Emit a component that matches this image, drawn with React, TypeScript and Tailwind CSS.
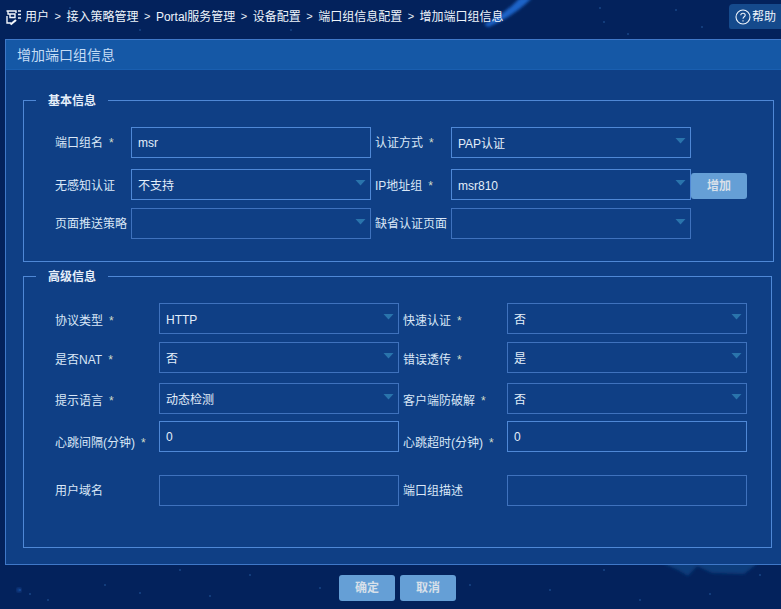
import type { ReactNode } from 'react'

const FONT = 'font-["Liberation_Sans","Noto_Sans_CJK_SC",sans-serif]'
const crumbs = ['用户', '接入策略管理', 'Portal服务管理', '设备配置', '端口组信息配置', '增加端口组信息']

const STARS = [
  [70, 8], [140, 30], [291, 30], [600, 8], [604, 22], [676, 10], [702, 27], [628, 34], [20, 590], [30, 594], [48, 600],
  [105, 585], [140, 593], [210, 596], [320, 588], [470, 585], [550, 590], [604, 570], [640, 600], [710, 594], [760, 575], [250, 575], [180, 570],
]

function Background() {
  return (
    <svg className="absolute inset-0" width="781" height="609">
      <defs>
        <filter id="glow"><feGaussianBlur stdDeviation="1.6" /></filter>
      </defs>
      <path d="M488 27 C505 20 520 10 532 -2 L520 -2 C510 8 498 18 484 24 Z" fill="#1c63c8" filter="url(#glow)" />
      {STARS.map(([x, y]) => (
        <circle key={`${x}-${y}`} cx={x} cy={y} r="0.7" fill="#2f6cb4" />
      ))}
      <circle cx="19" cy="590" r="2" fill="#1a50a4" filter="url(#glow)" />
      <path d="M660 562 L678 570 L688 576 L697 566 L712 573 L744 574 L758 563 Z" fill="#0f3c7c" filter="url(#glow)" />
    </svg>
  )
}

function Chevron() {
  return (
    <svg className="absolute right-[4px] top-[10px]" width="11" height="6" viewBox="0 0 11 6">
      <path d="M0.5 0 H10.5 L5.5 5.5 Z" fill="#2a74ac" />
    </svg>
  )
}

function Field({ value = '', select, dim, width, textTop }: { value?: string; select?: boolean; dim?: boolean; width: string; textTop?: boolean }) {
  return (
    <div className={`relative h-[31px] ${width} shrink-0 border ${dim ? 'border-[#3f72bd]' : 'border-[#4f88d6]'} flex ${textTop ? 'items-start pt-[6px]' : 'items-center'} ${select ? 'pt-[2px]' : ''} pl-[6px] text-[12px] text-[#e3eefa]`}>
      {value}
      {select && <Chevron />}
    </div>
  )
}

function Label({ text, star, width, className = '' }: { text: string; star?: boolean; width: string; className?: string }) {
  return (
    <div className={`${width} shrink-0 text-[12px] text-[#d9e7f7] whitespace-nowrap ${className}`}>
      {text}
      {star && <span className="ml-[6px] text-[#cfdcc8]">*</span>}
    </div>
  )
}

function Box({ title, className, children }: { title: string; className: string; children: ReactNode }) {
  return (
    <fieldset className={`border border-[#4f88d6] ${className}`}>
      <legend className="ml-[12px] px-[12px] h-[20px] leading-[22px] text-[12px] font-bold text-[#e6effa]">{title}</legend>
      {children}
    </fieldset>
  )
}

function Row({ className = '', children }: { className?: string; children: ReactNode }) {
  return <div className={`flex items-center ${className}`}>{children}</div>
}

export default function App() {
  return (
    <div className={`relative w-[781px] h-[609px] overflow-hidden bg-[#03225c] ${FONT}`}>
      <Background />
      <div className="relative flex flex-col h-full">
        {/* Breadcrumb */}
        <div className="h-[39px] flex items-start">
          <div className="flex items-center h-[33px] pl-[5px] text-[12px] text-[#eef4fb]">
            <svg width="17" height="17" viewBox="0 0 17 17" fill="none" stroke="#f2f6fb" strokeWidth="1.4" className="mr-[3px] mt-[2px]">
              <path d="M1.5 2 H11 V4 M3 2 V5 H10 V8.5 H5 V5 M2 7 V14 H6" />
              <path d="M13 2 H16 M13 5.5 H16 M13 9 H16" />
              <path d="M5.5 15.5 L11 11" strokeWidth="2.2" />
            </svg>
            {crumbs.map((c, i) => (
              <span key={c} className="flex items-center">
                {i > 0 && <span className="mx-[5.5px] text-[11px]">&gt;</span>}
                {c}
              </span>
            ))}
          </div>
          <div className="ml-auto mt-[4px] w-[52px] h-[25px] rounded-tl-[4px] rounded-bl-[2px] bg-[#154a8c] flex items-center pl-[6px] text-[12px] text-[#eef4fb]">
            <svg width="16" height="16" viewBox="0 0 16 16" fill="none" stroke="#eef4fb" strokeWidth="1.1" className="mr-[1px] shrink-0">
              <circle cx="8" cy="8" r="7" />
              <path d="M5.8 6.2 C5.8 3.6 10.2 3.6 10.2 6.2 C10.2 7.8 8 7.8 8 9.8" />
              <path d="M8 11.2 V12.4" />
            </svg>
            帮助
          </div>
        </div>

        {/* Panel */}
        <div className="ml-[5px] -mr-[4px] h-[526px] border border-[#3f78c8] bg-[#0f3f85] flex flex-col">
          <div className="h-[30px] shrink-0 bg-[#1558a6] border-b border-[#1a5fb0] flex items-center pl-[11px] pt-[2px] text-[14px] text-[#c4dcf5]">
            增加端口组信息
          </div>

          <Box title="基本信息" className="ml-[17px] w-[751px] h-[172px] mt-[20px] shrink-0">
            <Row className="mt-[17px]">
              <Label text="端口组名" star width="w-[107px] pl-[31px]" />
              <Field value="msr" width="w-[240px]" />
              <Label text="认证方式" star width="w-[80px] pl-[4px]" />
              <Field value="PAP认证" select width="w-[240px]" />
            </Row>
            <Row className="mt-[11px]">
              <Label text="无感知认证" width="w-[107px] pl-[31px]" className="pt-[2px]" />
              <Field value="不支持" select width="w-[240px]" />
              <Label text="IP地址组" star width="w-[80px] pl-[4px]" className="pt-[2px]" />
              <Field value="msr810" select width="w-[240px]" />
              <button className="w-[56px] h-[26px] mt-[3px] rounded-[3px] bg-[#659fd6] text-[12px] font-bold text-[#d7e0ea]">增加</button>
            </Row>
            <Row className="mt-[8px]">
              <Label text="页面推送策略" width="w-[107px] pl-[31px]" />
              <Field select dim width="w-[240px]" />
              <Label text="缺省认证页面" width="w-[80px] pl-[4px]" />
              <Field select dim width="w-[240px]" />
            </Row>
          </Box>

          <Box title="高级信息" className="ml-[17px] w-[749px] h-[282px] mt-[4px] shrink-0">
            <Row className="mt-[17px]">
              <Label text="协议类型" star width="w-[135px] pl-[31px]" className="pt-[4px]" />
              <Field value="HTTP" select dim width="w-[240px]" />
              <Label text="快速认证" star width="w-[108px] pl-[4px]" className="pt-[4px]" />
              <Field value="否" select dim width="w-[240px]" />
            </Row>
            <Row className="mt-[8px]">
              <Label text="是否NAT" star width="w-[135px] pl-[31px]" className="pt-[4px]" />
              <Field value="否" select dim width="w-[240px]" />
              <Label text="错误透传" star width="w-[108px] pl-[4px]" className="pt-[4px]" />
              <Field value="是" select dim width="w-[240px]" />
            </Row>
            <Row className="mt-[10px]">
              <Label text="提示语言" star width="w-[135px] pl-[31px]" className="pt-[4px]" />
              <Field value="动态检测" select dim width="w-[240px]" />
              <Label text="客户端防破解" star width="w-[108px] pl-[4px]" className="pt-[4px]" />
              <Field value="否" select dim width="w-[240px]" />
            </Row>
            <Row className="mt-[6px]">
              <Label text="心跳间隔(分钟)" star width="w-[135px] pl-[31px]" className="pt-[14px]" />
              <Field value="0" textTop width="w-[240px]" />
              <Label text="心跳超时(分钟)" star width="w-[108px] pl-[4px]" className="pt-[14px]" />
              <Field value="0" textTop width="w-[240px]" />
            </Row>
            <Row className="mt-[23px]">
              <Label text="用户域名" width="w-[135px] pl-[31px]" />
              <Field dim width="w-[240px]" />
              <Label text="端口组描述" width="w-[108px] pl-[4px]" />
              <Field dim width="w-[240px]" />
            </Row>
          </Box>
        </div>

        {/* Footer buttons */}
        <div className="flex justify-center gap-[5px] mt-[10px] pl-[14px]">
          <button className="w-[56px] h-[26px] rounded-[3px] bg-[#659fd6] text-[12px] font-bold text-[#d7e0ea]">确定</button>
          <button className="w-[56px] h-[26px] rounded-[3px] bg-[#659fd6] text-[12px] font-bold text-[#d7e0ea]">取消</button>
        </div>
      </div>
    </div>
  )
}
